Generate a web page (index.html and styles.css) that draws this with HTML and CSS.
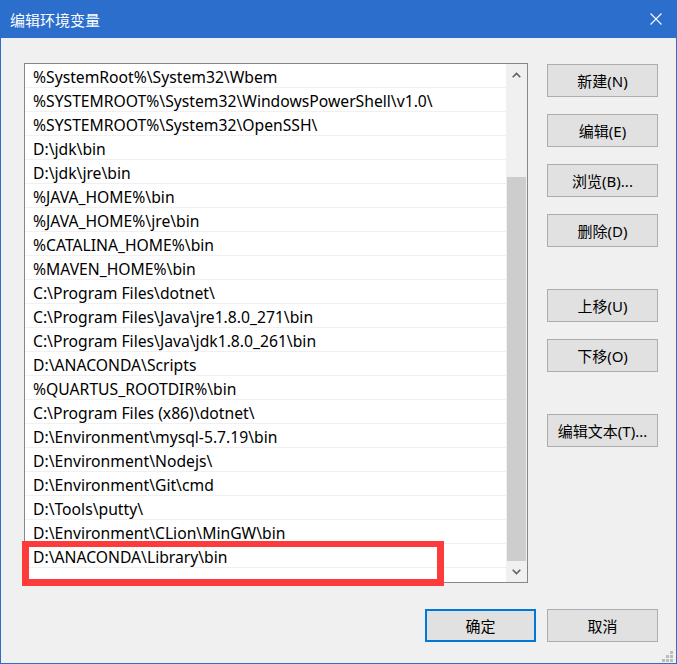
FILE: index.html
```html
<!DOCTYPE html>
<html lang="zh-CN">
<head>
<meta charset="utf-8">
<title>编辑环境变量</title>
<link rel="stylesheet" href="styles.css">
</head>
<body>
<div class="window">
  <div class="titlebar">
    <span class="title">编辑环境变量</span>
    <svg class="close" width="12" height="12" viewBox="0 0 12 12"><path d="M0.5 0.5 L11.5 11.5 M11.5 0.5 L0.5 11.5" stroke="#fff" stroke-width="1.1" fill="none"/></svg>
  </div>
  <div class="content">
    <div class="main">
      <div class="listbox">
        <div class="rows">
          <div class="row">%SystemRoot%\System32\Wbem</div>
          <div class="row">%SYSTEMROOT%\System32\WindowsPowerShell\v1.0\</div>
          <div class="row">%SYSTEMROOT%\System32\OpenSSH\</div>
          <div class="row">D:\jdk\bin</div>
          <div class="row">D:\jdk\jre\bin</div>
          <div class="row">%JAVA_HOME%\bin</div>
          <div class="row">%JAVA_HOME%\jre\bin</div>
          <div class="row">%CATALINA_HOME%\bin</div>
          <div class="row">%MAVEN_HOME%\bin</div>
          <div class="row">C:\Program Files\dotnet\</div>
          <div class="row">C:\Program Files\Java\jre1.8.0_271\bin</div>
          <div class="row">C:\Program Files\Java\jdk1.8.0_261\bin</div>
          <div class="row">D:\ANACONDA\Scripts</div>
          <div class="row">%QUARTUS_ROOTDIR%\bin</div>
          <div class="row">C:\Program Files (x86)\dotnet\</div>
          <div class="row">D:\Environment\mysql-5.7.19\bin</div>
          <div class="row">D:\Environment\Nodejs\</div>
          <div class="row">D:\Environment\Git\cmd</div>
          <div class="row">D:\Tools\putty\</div>
          <div class="row">D:\Environment\CLion\MinGW\bin</div>
          <div class="row">D:\ANACONDA\Library\bin</div>
          <div class="row"></div>
        </div>
        <div class="scrollbar">
          <div class="sb-btn"><svg width="9" height="6" viewBox="0 0 9 6"><path d="M0.7 5.3 L4.5 1.5 L8.3 5.3" stroke="#606060" stroke-width="1.6" fill="none"/></svg></div>
          <div class="sb-track"><div class="sb-thumb"></div></div>
          <div class="sb-btn"><svg width="9" height="6" viewBox="0 0 9 6"><path d="M0.7 0.7 L4.5 4.5 L8.3 0.7" stroke="#606060" stroke-width="1.6" fill="none"/></svg></div>
        </div>
      </div>
      <div class="side">
        <div class="group">
          <div class="btn">新建(N)</div>
          <div class="btn">编辑(E)</div>
          <div class="btn">浏览(B)...</div>
          <div class="btn">删除(D)</div>
        </div>
        <div class="group">
          <div class="btn">上移(U)</div>
          <div class="btn">下移(O)</div>
        </div>
        <div class="group">
          <div class="btn">编辑文本(T)...</div>
        </div>
      </div>
    </div>
    <div class="footer">
      <div class="btn default">确定</div>
      <div class="btn">取消</div>
    </div>
  </div>
  <div class="highlight"></div>
  <svg class="grip" width="11" height="11" viewBox="0 0 11 11">
    <rect x="8" y="0" width="3" height="3" fill="#bcbcbc"/>
    <rect x="4" y="4" width="3" height="3" fill="#bcbcbc"/>
    <rect x="8" y="4" width="3" height="3" fill="#bcbcbc"/>
    <rect x="0" y="8" width="3" height="3" fill="#bcbcbc"/>
    <rect x="4" y="8" width="3" height="3" fill="#bcbcbc"/>
    <rect x="8" y="8" width="3" height="3" fill="#bcbcbc"/>
  </svg>
</div>
</body>
</html>
```

FILE: styles.css
```css
html, body {
  margin: 0;
  padding: 0;
}
body {
  width: 677px;
  height: 664px;
  overflow: hidden;
  font-family: "Noto Sans", "Noto Sans CJK SC", sans-serif;
  color: #000;
}
.window {
  position: relative;
  box-sizing: border-box;
  width: 677px;
  height: 664px;
  border: 1px solid #2b6ecc;
  border-top: 0;
  background: #f0f0f0;
  display: flex;
  flex-direction: column;
}
.titlebar {
  height: 38px;
  flex: none;
  background: #2b6ecc;
  color: #fff;
  display: flex;
  align-items: center;
  justify-content: space-between;
  padding: 0 14px 0 9px;
  font-family: "Noto Sans CJK SC", sans-serif;
  font-size: 15px;
}
.close {
  display: block;
}
.content {
  padding: 25px 18px 0 23px;
}
.main {
  display: flex;
  gap: 19px;
}
.listbox {
  box-sizing: border-box;
  width: 504px;
  height: 520px;
  border: 1px solid #828790;
  background: #fff;
  display: flex;
}
.rows {
  flex: 1;
  overflow: hidden;
}
.row {
  height: 20px;
  line-height: 20px;
  padding-top: 3px;
  border-bottom: 1px solid #f0f0f0;
  padding-left: 8px;
  font-size: 15.7px;
  white-space: nowrap;
}
.scrollbar {
  width: 21px;
  flex: none;
  background: #f0f0f0;
  display: flex;
  flex-direction: column;
}
.sb-btn {
  height: 21px;
  flex: none;
  display: flex;
  align-items: center;
  justify-content: center;
}
.sb-btn svg {
  display: block;
}
.sb-track {
  flex: 1;
  display: flex;
  flex-direction: column;
  padding: 92px 1px 0 1px;
}
.sb-thumb {
  flex: 1;
  background: #cdcdcd;
}
.side {
  width: 111px;
  margin-top: 1px;
  display: flex;
  flex-direction: column;
  gap: 42px;
}
.group {
  display: flex;
  flex-direction: column;
  gap: 17px;
}
.btn {
  box-sizing: border-box;
  width: 111px;
  height: 33px;
  border: 1px solid #adadad;
  background: #e1e1e1;
  display: flex;
  align-items: center;
  justify-content: center;
  font-size: 15px;
  white-space: nowrap;
}
.btn.default {
  border: 2px solid #0078d7;
}
.footer {
  display: flex;
  justify-content: flex-end;
  gap: 11px;
  margin-top: 26px;
}
.highlight {
  position: absolute;
  left: 21px;
  top: 541px;
  width: 422px;
  height: 45px;
  box-sizing: border-box;
  border-style: solid;
  border-color: #fd3b3b;
  border-width: 6px 7px 7px 7px;
}
.grip {
  position: absolute;
  right: 3px;
  bottom: 1px;
}
```
